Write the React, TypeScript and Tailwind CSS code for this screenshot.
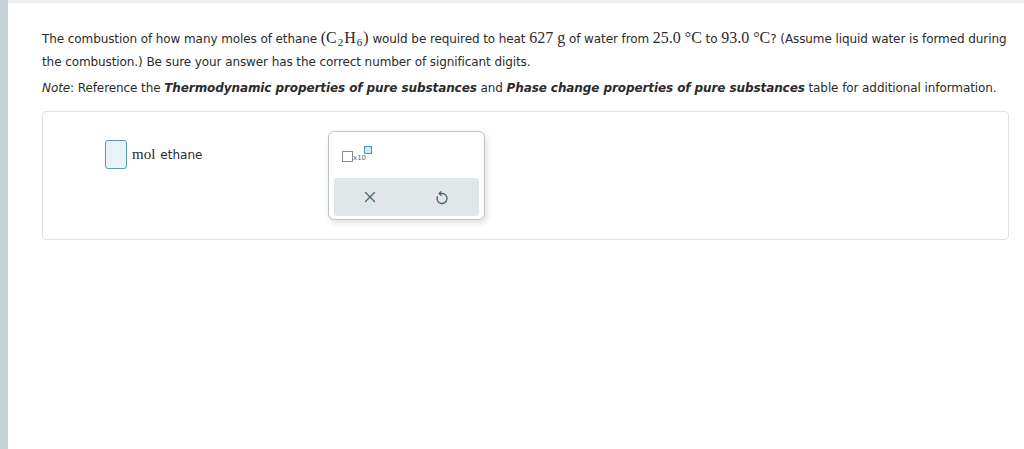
import React from "react";

const sans = "font-['DejaVu_Sans','Verdana',sans-serif]";
const serif = "font-['Liberation_Serif','Times_New_Roman',serif]";

function X10Icon() {
  return (
    <div className="relative h-[18px] w-[32px]">
      <span className="absolute left-0 top-[5px] h-[11px] w-[11px] border border-[#7f8d95]" />
      <span className={`absolute left-[11px] top-[9px] text-[7px] leading-none text-[#5d6d76] ${sans}`}>x10</span>
      <span className="absolute left-[22px] top-0 h-[8px] w-[8px] border border-[#4a9ab0] bg-[#cfe8f1]" />
    </div>
  );
}

function UndoIcon() {
  return (
    <svg width="14" height="16" viewBox="0 0 14 16" fill="none" stroke="#4c6470" strokeWidth="1.3" strokeLinecap="round" strokeLinejoin="round">
      <path d="M4.5 4.5 H7 A5 5 0 1 1 2.4 7.6" />
      <path d="M6 2.6 L4.2 4.5 L6 6.4" />
    </svg>
  );
}

export default function App() {
  const math = `text-[16px] leading-none tracking-normal ${serif}`;
  return (
    <div className="flex min-h-[449px] bg-white text-[#2b2b2b]">
      {/* left rail */}
      <div className="w-2 shrink-0 bg-[#c6d1d7]" />

      <main className="flex-1 border-t-[3px] border-[#eef1f2] pl-[34px] pr-[15px] pt-[25px]">
        <p className={`text-[12px] leading-[23px] tracking-[-0.09px] ${sans}`}>
          The combustion of how many moles of ethane{" "}
          <span className={math}>
            (C<sub className="mx-[1px] text-[11px]">2</sub>H<sub className="mx-[1px] text-[11px]">6</sub>)
          </span>{" "}
          would be required to heat <span className={math}>627 g</span> of water from{" "}
          <span className={math}>25.0 °C</span> to <span className={math}>93.0 °C</span>? (Assume liquid water is
          formed during the combustion.) Be sure your answer has the correct number of significant digits.
        </p>
        <p className={`mt-[3px] text-[12px] leading-[23px] tracking-[-0.09px] ${sans}`}>
          <i>Note</i>: Reference the <b><i>Thermodynamic properties of pure substances</i></b> and{" "}
          <b><i>Phase change properties of pure substances</i></b> table for additional information.
        </p>

        {/* answer card */}
        <div className="mt-[11px] flex items-start rounded-[4px] border border-[#dbe2e5] py-[19px]">
          <div className="w-[285px] shrink-0 pl-[62px] pt-[9px]">
            <div className="flex items-center gap-[5px]">
              <span className="h-[29px] w-[22px] rounded-[3px] border border-[#5c9aa9] bg-[#e8f3f6]" />
              <span className={`text-[15px] ${serif}`}>mol</span>
              <span className={`text-[12px] ${sans}`}>ethane</span>
            </div>
          </div>

          <div className="flex h-[89px] w-[157px] flex-col rounded-[6px] border border-[#b9c3c8] bg-white px-[5px] pb-[3px] shadow-[2px_3px_6px_rgba(0,0,0,0.12)]">
            <div className="flex h-[46px] items-start pl-[8px] pt-[14px]">
              <X10Icon />
            </div>
            <div className="grid flex-1 grid-cols-2 rounded-[3px] bg-[#e1e6e9]">
              <div className="flex items-center justify-center">
                <svg width="12" height="12" viewBox="0 0 12 12" stroke="#4c6470" strokeWidth="1.3" strokeLinecap="round">
                  <path d="M1.5 1.5 L10.5 10.5 M10.5 1.5 L1.5 10.5" />
                </svg>
              </div>
              <div className="flex items-center justify-center pr-[2px]">
                <UndoIcon />
              </div>
            </div>
          </div>
        </div>
      </main>
    </div>
  );
}
